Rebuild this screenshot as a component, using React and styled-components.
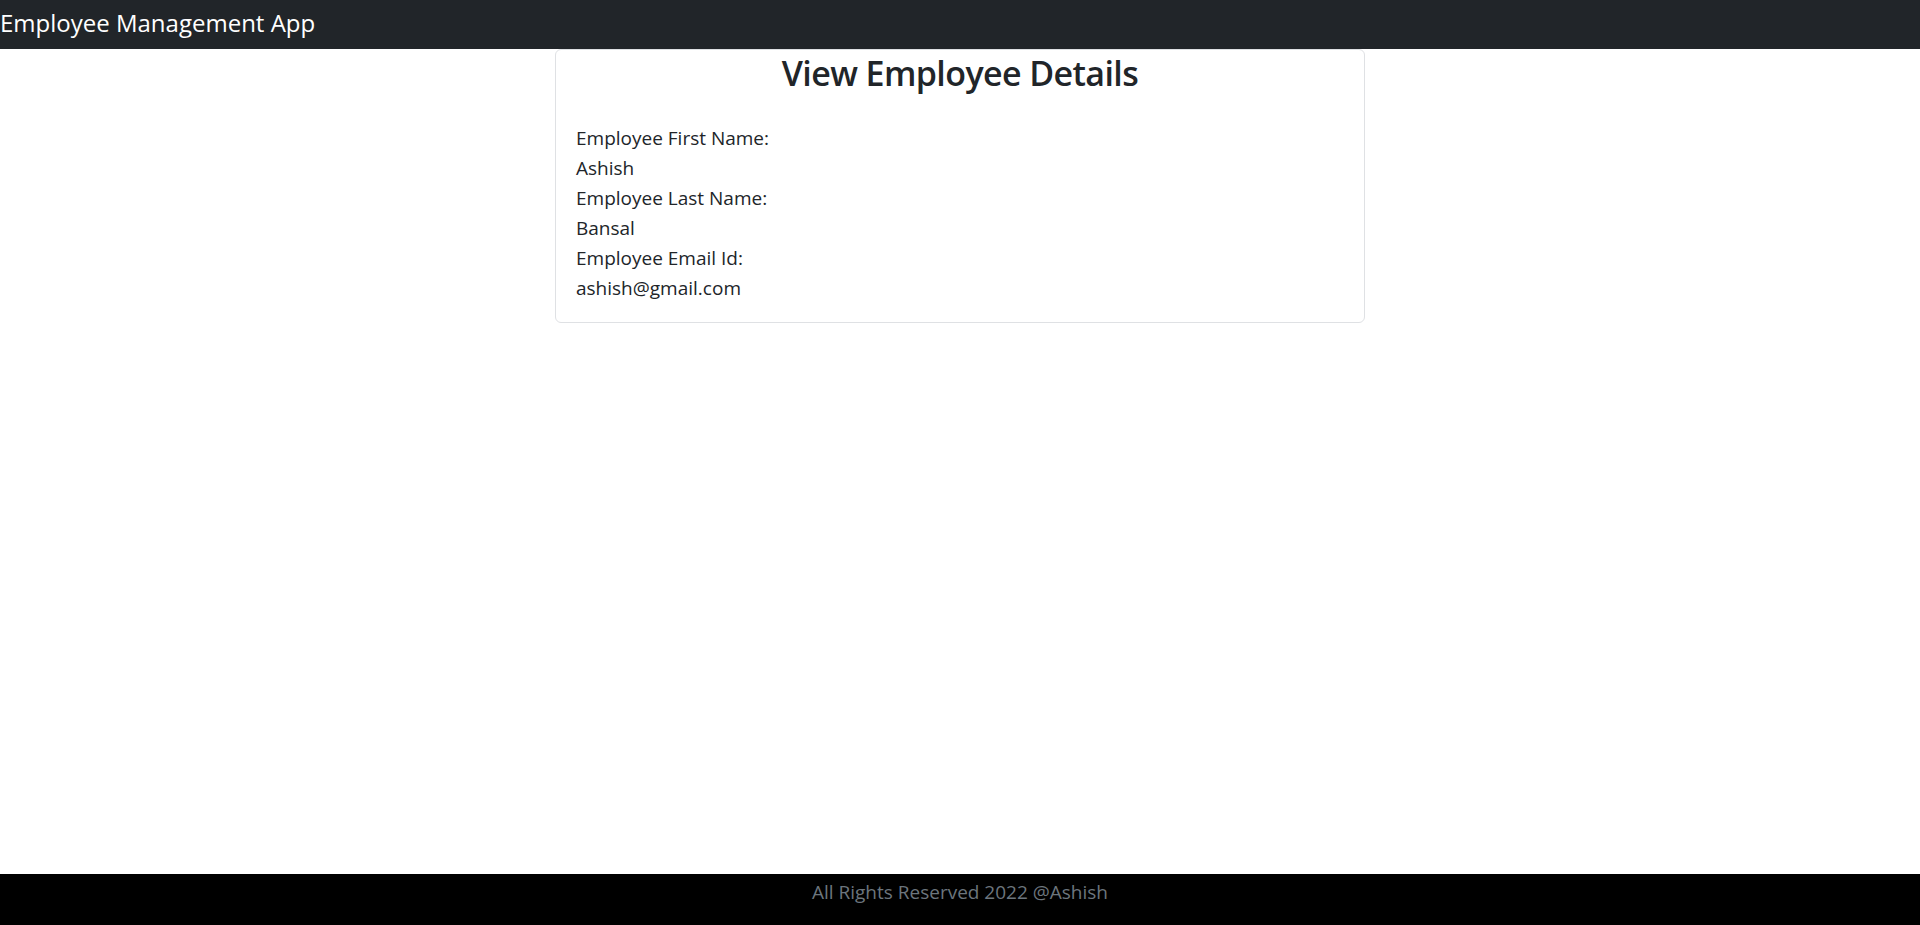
import React from 'react';
import styled, { createGlobalStyle } from 'styled-components';

const GlobalStyle = createGlobalStyle`
  html, body {
    margin: 0;
    padding: 0;
    background: #fff;
    font-family: "Open Sans", "Noto Sans", "Liberation Sans", sans-serif;
    color: #212529;
  }
  * { box-sizing: border-box; }
`;

const Page = styled.div`
  min-height: 925px;
  display: flex;
  flex-direction: column;
`;

const NavBar = styled.header`
  height: 49px;
  background: #212529;
  display: flex;
  align-items: center;
`;

const Brand = styled.span`
  color: #fff;
  font-size: 24px;
  line-height: 30px;
  padding-bottom: 4px;
`;

const Main = styled.main`
  flex: 1;
  display: flex;
  justify-content: center;
  align-items: flex-start;
`;

const Card = styled.section`
  width: 810px;
  border: 1px solid #dfe1e4;
  border-radius: 6px;
  background: #fff;
`;

const Title = styled.h2`
  margin: 0 0 10px;
  text-align: center;
  font-size: 34px;
  font-weight: 600;
  letter-spacing: -0.6px;
  line-height: 47px;
`;

const Body = styled.div`
  padding: 16px 20px 19px;
`;

const Line = styled.div`
  font-size: 19px;
  line-height: 30px;
`;

const Footer = styled.footer`
  height: 51px;
  background: #000;
  text-align: center;
  color: #6c757d;
  font-size: 19px;
  line-height: 30px;
  padding-top: 3px;
`;

const details = [
  ['Employee First Name:', 'Ashish'],
  ['Employee Last Name:', 'Bansal'],
  ['Employee Email Id:', 'ashish@gmail.com'],
];

const App = () => (
  <Page>
    <GlobalStyle />
    <NavBar>
      <Brand>Employee Management App</Brand>
    </NavBar>
    <Main>
      <Card>
        <Title>View Employee Details</Title>
        <Body>
          {details.map(([label, value]) => (
            <React.Fragment key={label}>
              <Line>{label}</Line>
              <Line>{value}</Line>
            </React.Fragment>
          ))}
        </Body>
      </Card>
    </Main>
    <Footer>All Rights Reserved 2022 @Ashish</Footer>
  </Page>
);

export default App;
